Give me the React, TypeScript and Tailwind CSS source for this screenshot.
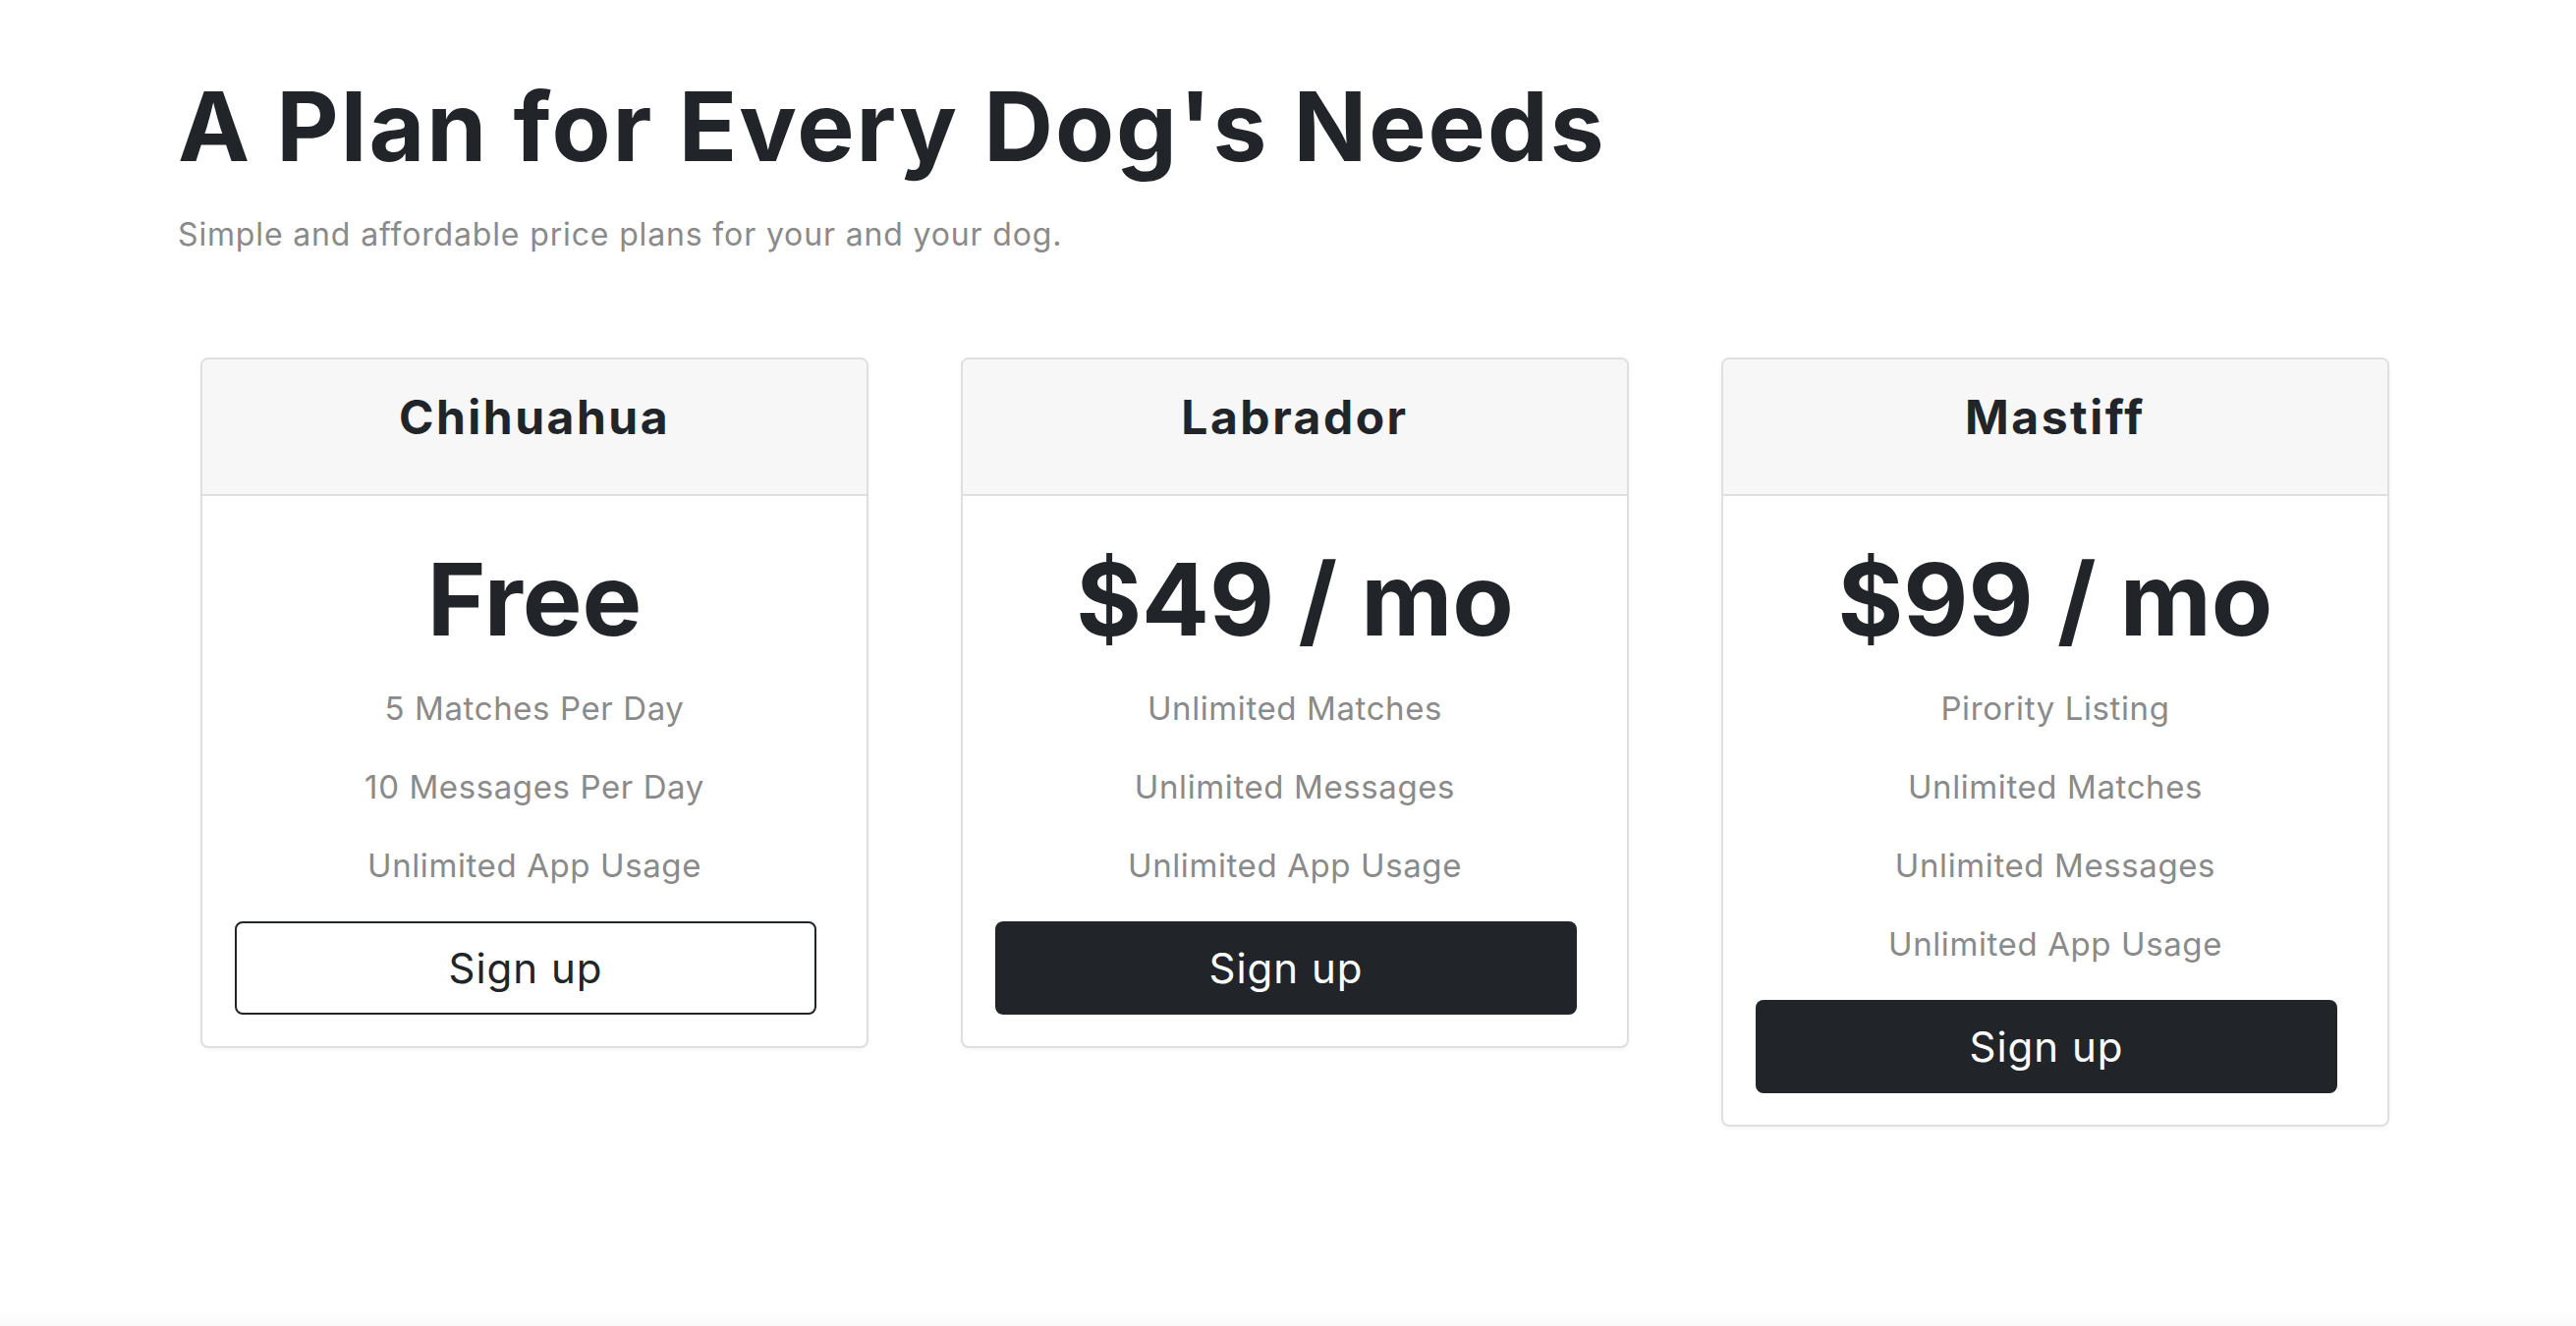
import { useMemo } from 'react'

type Plan = {
  key: string
  name: string
  price: string
  features: string[]
  filled: boolean
}

export default function App() {
  const plans = useMemo<Plan[]>(
    () => [
      {
        key: 'chihuahua',
        name: 'Chihuahua',
        price: 'Free',
        features: ['5 Matches Per Day', '10 Messages Per Day', 'Unlimited App Usage'],
        filled: false,
      },
      {
        key: 'labrador',
        name: 'Labrador',
        price: '$49 / mo',
        features: ['Unlimited Matches', 'Unlimited Messages', 'Unlimited App Usage'],
        filled: true,
      },
      {
        key: 'mastiff',
        name: 'Mastiff',
        price: '$99 / mo',
        features: ['Pirority Listing', 'Unlimited Matches', 'Unlimited Messages', 'Unlimited App Usage'],
        filled: true,
      },
    ],
    []
  )

  return (
    <div className="flex min-h-screen flex-col bg-white font-['Inter','Noto_Sans',sans-serif] text-[#212529]">
      <section className="flex-1 pl-[181px] pt-[69px]">
        <h1 className="text-[98px] font-bold leading-[120px] tracking-[2px]">A Plan for Every Dog's Needs</h1>
        <p className="mt-[30px] text-[32px] leading-[40px] tracking-[0.85px] text-[#8a8a8a]">
          Simple and affordable price plans for your and your dog.
        </p>

        <div className="ml-[23px] mt-[105px] flex items-start gap-[94px]">
          {plans.map((plan) => (
            <div
              key={plan.key}
              className="w-[680px] overflow-hidden rounded-[8px] border-2 border-[#dfdfdf] bg-white shadow-[0_2px_4px_rgba(0,0,0,0.04)]"
            >
              <div className="flex h-[139px] items-center justify-center border-b-2 border-[#dfdfdf] bg-[#f7f7f7] pb-[20px]">
                <h4 className="text-[48px] font-bold leading-[60px] tracking-[2.5px]">{plan.name}</h4>
              </div>
              <div className="flex flex-col items-center px-[33px] pb-[32px] pt-[45px]">
                <div className="text-[102px] font-bold leading-[120px]">{plan.price}</div>
                <ul className="mt-[11px] flex flex-col items-center">
                  {plan.features.map((f) => (
                    <li key={f} className="text-[33px] leading-[80px] tracking-[0.6px] text-[#8a8a8a]">
                      {f}
                    </li>
                  ))}
                </ul>
                <button
                  type="button"
                  className={
                    plan.filled
                      ? 'mr-[18px] mt-[17px] h-[95px] w-[592px] self-start rounded-[8px] bg-[#212529] text-[42px] tracking-[1px] text-white'
                      : 'mr-[18px] mt-[17px] h-[95px] w-[592px] self-start rounded-[8px] border-2 border-[#212529] bg-white text-[42px] tracking-[1px] text-[#212529]'
                  }
                >
                  Sign up
                </button>
              </div>
            </div>
          ))}
        </div>
      </section>
      <div className="h-[16px] bg-gradient-to-b from-white to-[#f9f9f9]" />
    </div>
  )
}
